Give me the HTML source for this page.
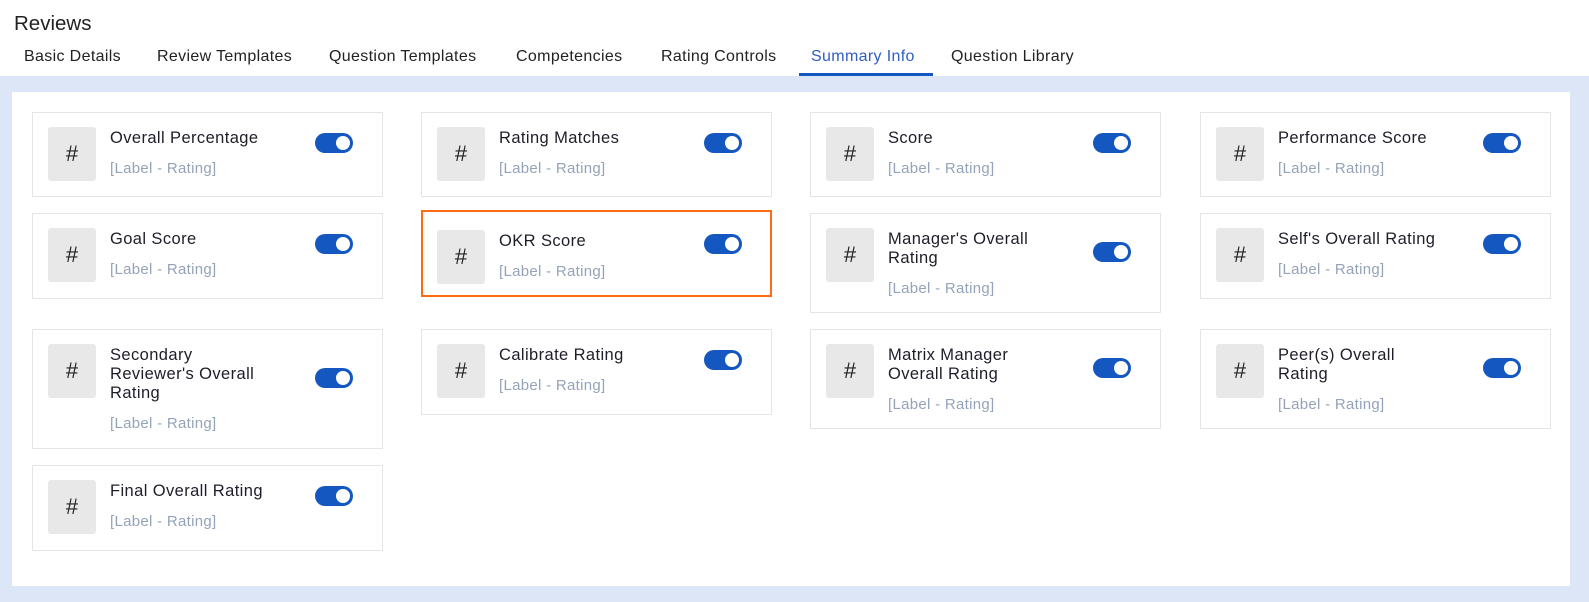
<!DOCTYPE html>
<html><head><meta charset="utf-8"><style>
*{box-sizing:border-box;margin:0;padding:0}
body{width:1589px;height:602px;background:#dce6f6;font-family:"Liberation Sans",sans-serif;position:relative;overflow:hidden;color:#1e1e2a}
.hdr{position:absolute;left:0;top:0;width:1589px;height:76px;background:#fff}
.title{position:absolute;left:14px;top:12px;font-size:20.5px;color:#222}
.tab{position:absolute;top:48px;font-size:16px;letter-spacing:.35px;color:#222;white-space:nowrap}
.tab.act{color:#2f5ec4}
.ul{position:absolute;left:799px;top:73px;width:134px;height:3px;background:#1557c0}
.panel{position:absolute;left:12px;top:92px;width:1558px;height:494px;background:#fff}
.card{position:absolute;width:351px;border:1px solid #e3e5e8;background:#fff;padding:14px 15px 14px 15px;display:flex;align-items:flex-start}
.ic{width:48px;height:54px;background:#e8e8e8;border-radius:3px;font-size:22px;display:flex;align-items:center;justify-content:center;color:#222;flex:none}
.tx{margin-left:14px;width:190px;padding-top:2px}
.t{font-size:16.5px;letter-spacing:.4px;line-height:19px;color:#1e1e2a;white-space:nowrap}
.s{font-size:15px;letter-spacing:.3px;line-height:20px;color:#95a3b8;margin-top:11px}
.tg{position:absolute;left:282px;width:38px;height:20px;border-radius:10px;background:#1557c0}
.tg::after{content:"";position:absolute;right:3px;top:3px;width:14px;height:14px;border-radius:50%;background:#fff}
.hl{border:2px solid #ff6a13}
</style></head><body>
<div class="hdr">
<div class="title">Reviews</div>
<div class="tab" style="left:24px">Basic Details</div>
<div class="tab" style="left:157px">Review Templates</div>
<div class="tab" style="left:329px">Question Templates</div>
<div class="tab" style="left:516px">Competencies</div>
<div class="tab" style="left:661px">Rating Controls</div>
<div class="tab act" style="left:811px">Summary Info</div>
<div class="tab" style="left:951px">Question Library</div>
<div class="ul"></div>
</div>
<div class="panel"></div>

<div class="card" style="left:32px;top:112px;height:85px"><div class="ic">#</div><div class="tx"><div class="t">Overall Percentage</div><div class="s">[Label - Rating]</div></div><div class="tg" style="top:20px"></div></div>
<div class="card" style="left:421px;top:112px;height:85px"><div class="ic">#</div><div class="tx"><div class="t">Rating Matches</div><div class="s">[Label - Rating]</div></div><div class="tg" style="top:20px"></div></div>
<div class="card" style="left:810px;top:112px;height:85px"><div class="ic">#</div><div class="tx"><div class="t">Score</div><div class="s">[Label - Rating]</div></div><div class="tg" style="top:20px"></div></div>
<div class="card" style="left:1200px;top:112px;height:85px"><div class="ic">#</div><div class="tx"><div class="t">Performance Score</div><div class="s">[Label - Rating]</div></div><div class="tg" style="top:20px"></div></div>

<div class="card" style="left:32px;top:213px;height:86px"><div class="ic">#</div><div class="tx"><div class="t">Goal Score</div><div class="s">[Label - Rating]</div></div><div class="tg" style="top:20px"></div></div>
<div class="card hl" style="left:421px;top:210px;height:87px;padding:18px 14px 10px"><div class="ic">#</div><div class="tx"><div class="t">OKR Score</div><div class="s">[Label - Rating]</div></div><div class="tg" style="top:22px;left:281px"></div></div>
<div class="card" style="left:810px;top:213px;height:100px"><div class="ic">#</div><div class="tx"><div class="t">Manager's Overall<br>Rating</div><div class="s">[Label - Rating]</div></div><div class="tg" style="top:28px"></div></div>
<div class="card" style="left:1200px;top:213px;height:86px"><div class="ic">#</div><div class="tx"><div class="t">Self's Overall Rating</div><div class="s">[Label - Rating]</div></div><div class="tg" style="top:20px"></div></div>

<div class="card" style="left:32px;top:329px;height:120px"><div class="ic">#</div><div class="tx"><div class="t">Secondary<br>Reviewer's Overall<br>Rating</div><div class="s">[Label - Rating]</div></div><div class="tg" style="top:38px"></div></div>
<div class="card" style="left:421px;top:329px;height:86px"><div class="ic">#</div><div class="tx"><div class="t">Calibrate Rating</div><div class="s">[Label - Rating]</div></div><div class="tg" style="top:20px"></div></div>
<div class="card" style="left:810px;top:329px;height:100px"><div class="ic">#</div><div class="tx"><div class="t">Matrix Manager<br>Overall Rating</div><div class="s">[Label - Rating]</div></div><div class="tg" style="top:28px"></div></div>
<div class="card" style="left:1200px;top:329px;height:100px"><div class="ic">#</div><div class="tx"><div class="t">Peer(s) Overall<br>Rating</div><div class="s">[Label - Rating]</div></div><div class="tg" style="top:28px"></div></div>

<div class="card" style="left:32px;top:465px;height:86px"><div class="ic">#</div><div class="tx"><div class="t">Final Overall Rating</div><div class="s">[Label - Rating]</div></div><div class="tg" style="top:20px"></div></div>
</body></html>
